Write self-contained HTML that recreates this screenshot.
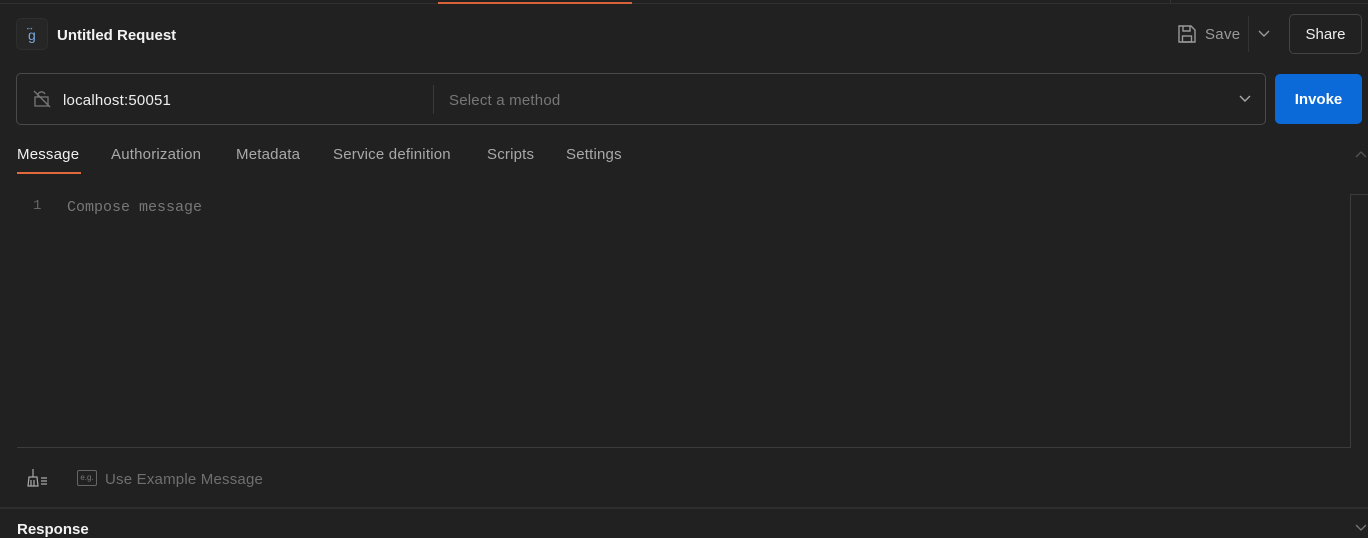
<!DOCTYPE html>
<html><head><style>
*{margin:0;padding:0;box-sizing:border-box}
body{width:1368px;height:537px;background:#212121;font-family:"Liberation Sans",sans-serif;color:#e6e6e6;position:relative;overflow:hidden;font-size:14px}
.a{position:absolute}
.t{font-size:15px;color:#a8a8a8;top:146px;letter-spacing:0.2px}
</style></head><body>
<div class="a" style="left:0;top:3px;width:1368px;height:1px;background:#303030"></div>
<div class="a" style="left:438px;top:2px;width:194px;height:2px;background:#d8633a"></div>
<div class="a" style="left:1170px;top:0;width:1px;height:4px;background:#333"></div>
<div class="a" style="left:16px;top:18px;width:32px;height:32px;border-radius:5px;background:#262626;border:1px solid #2e2e2e"></div>
<div class="a" style="left:25px;top:22px;color:#7aa7e0;font-size:9px">↔</div>
<div class="a" style="left:28px;top:27px;color:#7aa7e0;font-size:14px">g</div>
<div class="a" style="left:57px;top:27px;font-weight:bold;font-size:15px;color:#f2f2f2">Untitled Request</div>
<svg class="a" style="left:1178px;top:24px" width="18" height="20" viewBox="0 0 18 20" fill="none" stroke="#9a9a9a" stroke-width="1.4"><path d="M1 2h12l4 4v12H1z"/><path d="M5 2v5h7V2"/><rect x="4.5" y="12" width="9" height="6"/></svg>
<div class="a" style="left:1205px;top:26px;color:#9a9a9a;font-size:15px;letter-spacing:0.3px">Save</div>
<div class="a" style="left:1248px;top:16px;width:1px;height:36px;background:#333"></div>
<svg class="a" style="left:1257px;top:29px" width="14" height="9" fill="none" stroke="#9a9a9a" stroke-width="1.4"><path d="M2 2l5 5 5-5"/></svg>
<div class="a" style="left:1289px;top:14px;width:73px;height:40px;border:1px solid #444;border-radius:5px;text-align:center;line-height:40px;font-size:15px;color:#eee">Share</div>
<div class="a" style="left:16px;top:73px;width:1250px;height:52px;border:1px solid #4a4a4a;border-radius:5px"></div>
<svg class="a" style="left:33px;top:90px" width="18" height="18" fill="none" stroke="#777" stroke-width="1.3"><rect x="2" y="7" width="13" height="9"/><path d="M5 7V4a4 4 0 0 1 7 0"/><path d="M1 1l16 16"/></svg>
<div class="a" style="left:63px;top:92px;font-size:15px;color:#eee;letter-spacing:0.2px">localhost:50051</div>
<div class="a" style="left:433px;top:85px;width:1px;height:29px;background:#3a3a3a"></div>
<div class="a" style="left:449px;top:92px;font-size:15px;color:#777;letter-spacing:0.2px">Select a method</div>
<svg class="a" style="left:1238px;top:94px" width="14" height="9" fill="none" stroke="#aaa" stroke-width="1.4"><path d="M2 2l5 5 5-5"/></svg>
<div class="a" style="left:1275px;top:74px;width:87px;height:50px;background:#0c69d8;border-radius:5px;text-align:center;line-height:51px;font-weight:bold;font-size:15px;color:#fff">Invoke</div>
<div class="a t" style="left:17px;color:#f0f0f0">Message</div>
<div class="a" style="left:17px;top:172px;width:64px;height:2px;background:#e0693d"></div>
<div class="a t" style="left:111px">Authorization</div>
<div class="a t" style="left:236px">Metadata</div>
<div class="a t" style="left:333px">Service definition</div>
<div class="a t" style="left:487px">Scripts</div>
<div class="a t" style="left:566px">Settings</div>
<svg class="a" style="left:1355px;top:150px" width="13" height="8" fill="none" stroke="#555" stroke-width="1.3"><path d="M1 7l5-5 5 5"/></svg>
<div class="a" style="left:33px;top:198px;font-family:'Liberation Mono',monospace;font-size:14px;color:#666">1</div>
<div class="a" style="left:67px;top:199px;font-family:'Liberation Mono',monospace;font-size:15px;color:#777">Compose message</div>
<div class="a" style="left:1350px;top:194px;width:18px;height:254px;border-left:1px solid #3c3c3c;border-top:1px solid #3c3c3c"></div>
<div class="a" style="left:17px;top:447px;width:1333px;height:1px;background:#3c3c3c"></div>
<svg class="a" style="left:26px;top:468px" width="22" height="20" fill="none" stroke="#aaa" stroke-width="1.2"><path d="M7 1v8"/><path d="M3 9h8l1 9H2z"/><path d="M5 12v6M8 12v6"/><path d="M15 10h6M15 13h6M15 16h6"/></svg>
<div class="a" style="left:77px;top:470px;width:20px;height:16px;border:1px solid #666;border-radius:2px;font-size:8px;color:#777;text-align:center;line-height:14px">e.g.</div>
<div class="a" style="left:105px;top:471px;font-size:15px;color:#6f6f6f;letter-spacing:0.2px">Use Example Message</div>
<div class="a" style="left:0;top:507px;width:1368px;height:2px;background:#2e2e2e"></div>
<div class="a" style="left:17px;top:521px;font-weight:bold;font-size:15px;color:#f2f2f2">Response</div>
<svg class="a" style="left:1355px;top:524px" width="13" height="8" fill="none" stroke="#777" stroke-width="1.3"><path d="M1 1l5 5 5-5"/></svg>
</body></html>
